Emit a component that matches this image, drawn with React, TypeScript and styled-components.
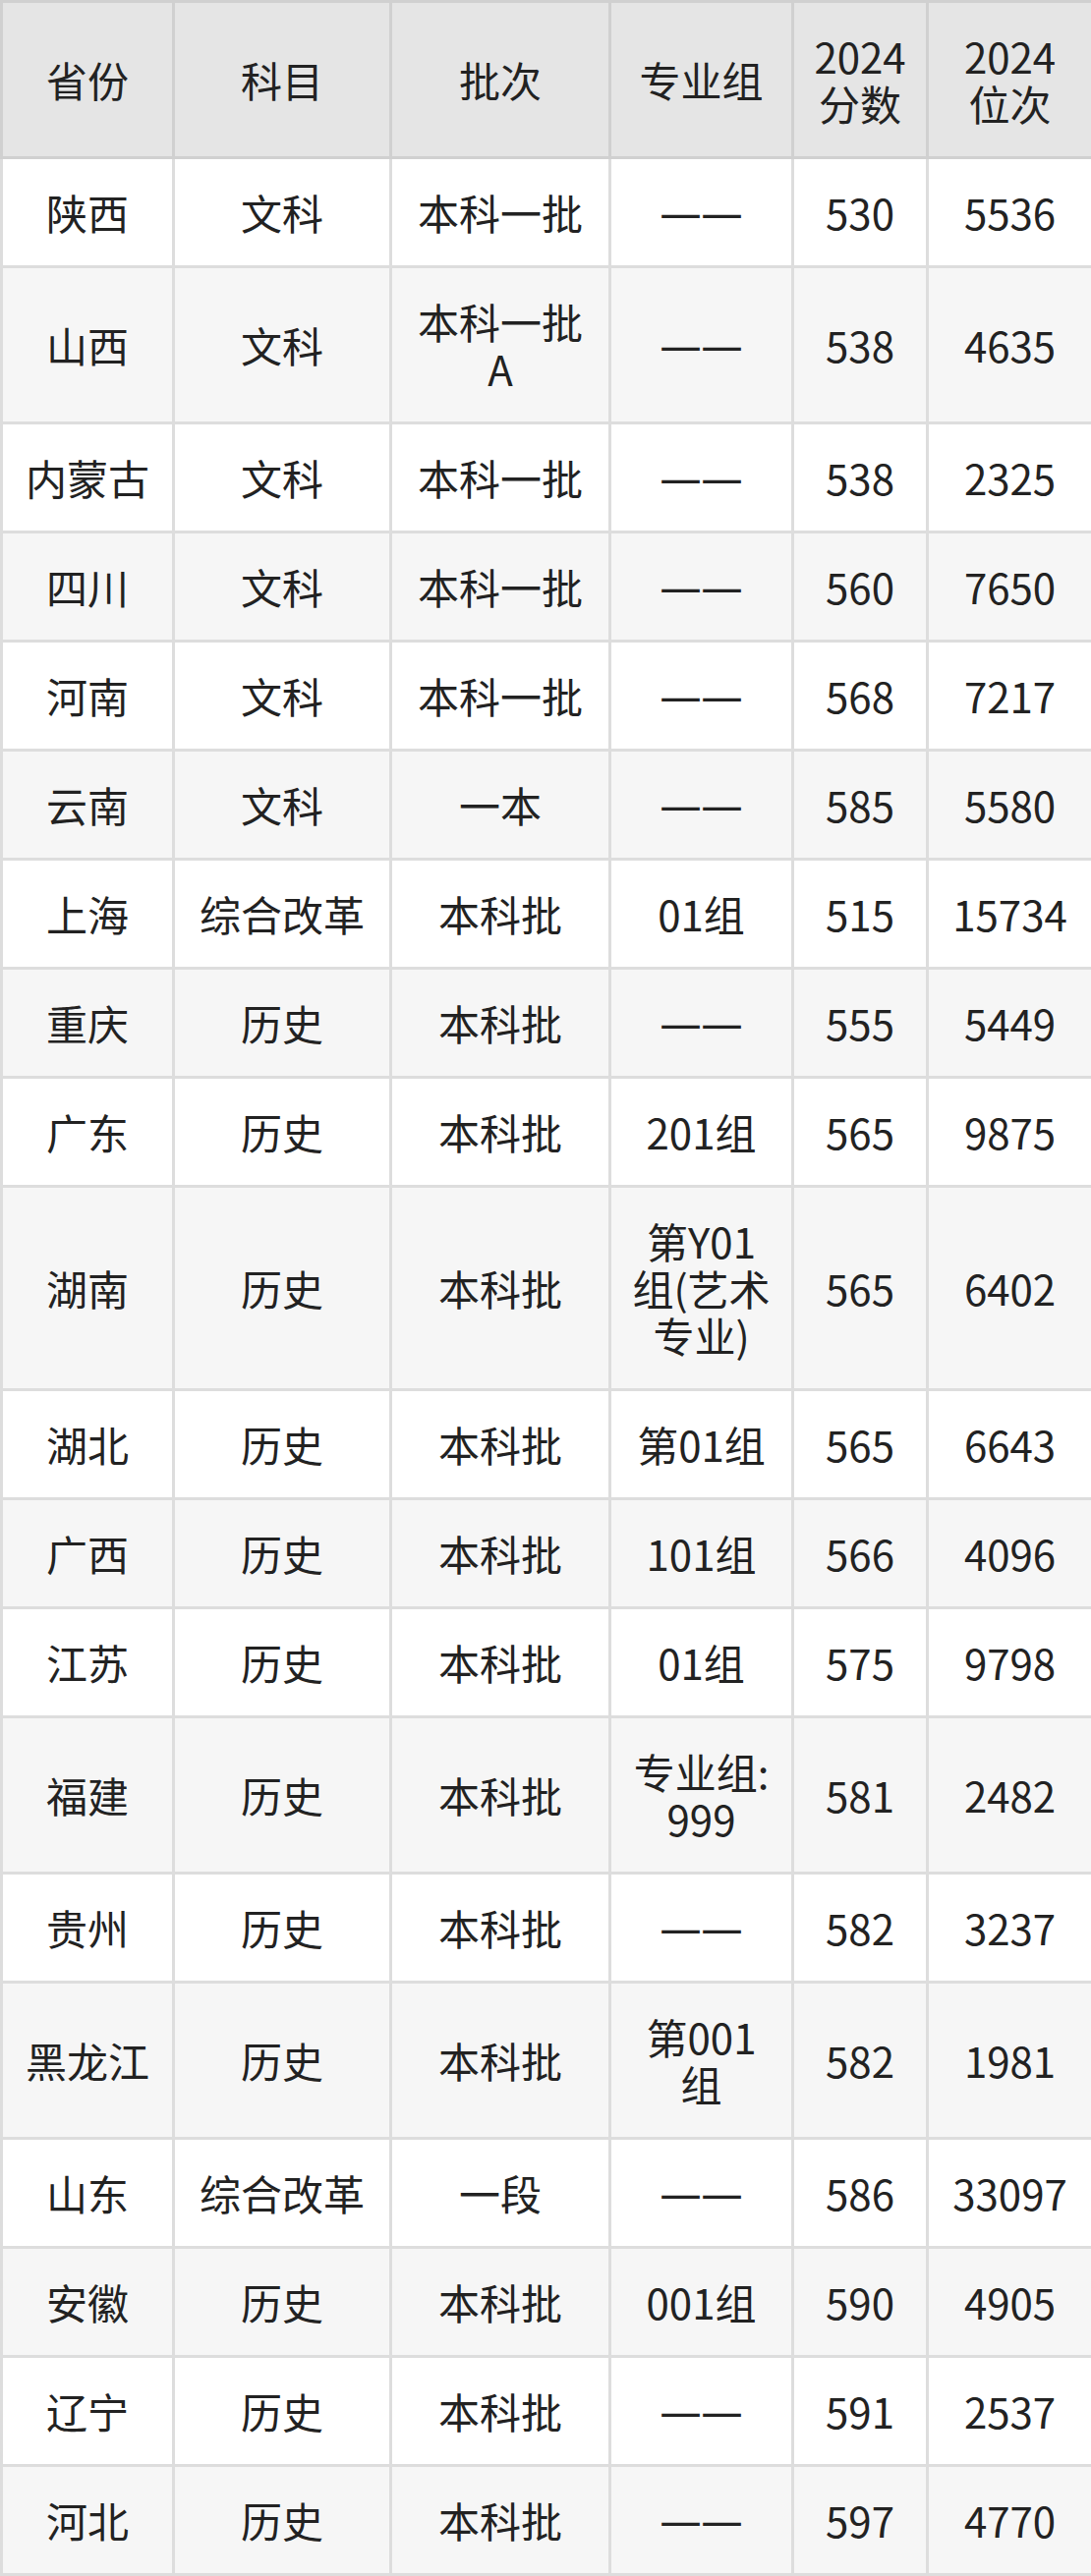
import * as React from 'react';
import styled, { createGlobalStyle } from 'styled-components';

const GlobalStyle = createGlobalStyle`
    html, body {
        margin: 0;
        padding: 0;
        background: #ffffff;
    }
    body {
        font-family: "Noto Sans CJK SC", "Noto Sans", sans-serif;
    }
`;

const Table = styled.table`
    width: 1110px;
    border-collapse: collapse;
    table-layout: fixed;
    font-family: "Noto Sans CJK SC", "Noto Sans", sans-serif;
    font-size: 42px;
    line-height: 48px;
    color: #222222;
`;

const HeadCell = styled.th`
    background: #e5e5e5;
    border: 3px solid #d0d0d0;
    padding: 30px 18px;
    font-weight: 400;
    text-align: center;
    vertical-align: middle;
    white-space: pre-line;
`;

const Row = styled.tr<{ $striped: boolean }>`
    background: ${p => (p.$striped ? '#f6f6f6' : '#ffffff')};
`;

const Cell = styled.td`
    border: 3px solid #dddddd;
    padding: 30px 18px;
    text-align: center;
    vertical-align: middle;
    white-space: pre-line;
`;

// 破折号用拉丁字体，两段之间留一点空隙
const Dash = styled.span`
    display: inline-block;
    height: 48px;
    line-height: 48px;
    vertical-align: top;
    font-family: "Noto Sans", sans-serif;
`;

const columns = [
    { title: '省份', width: 175 },
    { title: '科目', width: 221 },
    { title: '批次', width: 223 },
    { title: '专业组', width: 186 },
    { title: '2024\n分数', width: 137 },
    { title: '2024\n位次', width: 168 }
];

const rows: string[][] = [
    ['陕西', '文科', '本科一批', '——', '530', '5536'],
    ['山西', '文科', '本科一批\nA', '——', '538', '4635'],
    ['内蒙古', '文科', '本科一批', '——', '538', '2325'],
    ['四川', '文科', '本科一批', '——', '560', '7650'],
    ['河南', '文科', '本科一批', '——', '568', '7217'],
    ['云南', '文科', '一本', '——', '585', '5580'],
    ['上海', '综合改革', '本科批', '01组', '515', '15734'],
    ['重庆', '历史', '本科批', '——', '555', '5449'],
    ['广东', '历史', '本科批', '201组', '565', '9875'],
    ['湖南', '历史', '本科批', '第Y01\n组(艺术\n专业)', '565', '6402'],
    ['湖北', '历史', '本科批', '第01组', '565', '6643'],
    ['广西', '历史', '本科批', '101组', '566', '4096'],
    ['江苏', '历史', '本科批', '01组', '575', '9798'],
    ['福建', '历史', '本科批', '专业组:\n999', '581', '2482'],
    ['贵州', '历史', '本科批', '——', '582', '3237'],
    ['黑龙江', '历史', '本科批', '第001\n组', '582', '1981'],
    ['山东', '综合改革', '一段', '——', '586', '33097'],
    ['安徽', '历史', '本科批', '001组', '590', '4905'],
    ['辽宁', '历史', '本科批', '——', '591', '2537'],
    ['河北', '历史', '本科批', '——', '597', '4770']
];

export default function App() {
    return (
        <>
            <GlobalStyle />
            <Table lang="zh-CN">
                <colgroup>
                    {columns.map(c => (
                        <col key={c.title} style={{ width: c.width }} />
                    ))}
                </colgroup>
                <thead>
                    <tr>
                        {columns.map(c => (
                            <HeadCell key={c.title}>{c.title}</HeadCell>
                        ))}
                    </tr>
                </thead>
                <tbody>
                    {rows.map((r, i) => (
                        <Row key={r[0]} $striped={i % 2 === 1}>
                            {r.map((v, j) => (
                                <Cell key={j}>{v === '——' ? <Dash>{v}</Dash> : v}</Cell>
                            ))}
                        </Row>
                    ))}
                </tbody>
            </Table>
        </>
    );
}
